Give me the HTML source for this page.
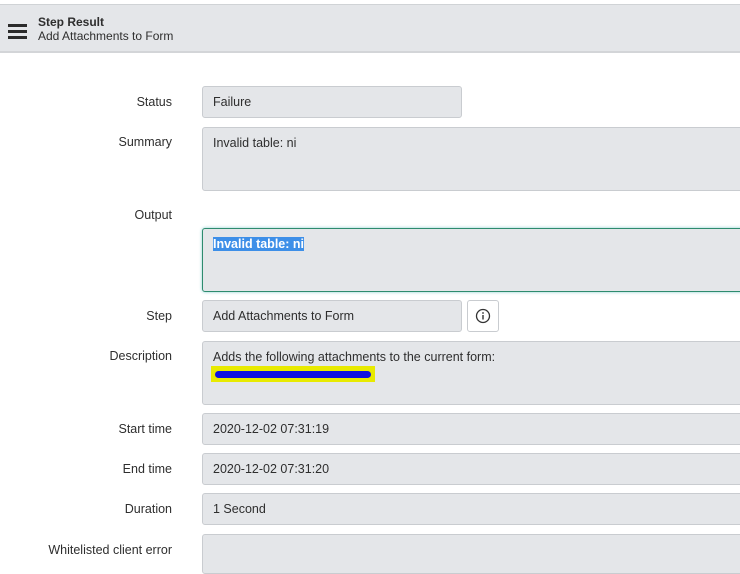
<!DOCTYPE html>
<html><head><style>
body{margin:0;width:740px;height:559px;overflow:hidden;background:#fff;font-family:"Liberation Sans",sans-serif;font-size:12.5px;color:#2e2e2e;position:relative}
.hdr{position:absolute;left:0;top:4px;width:740px;height:46px;background:#e4e6e9;border-top:1px solid #d0d3d6;border-bottom:2px solid #d3d5d8}
.ham{position:absolute;left:8px;top:19px;width:19px}
.ham i{display:block;height:3px;background:#2b2b2b;margin-bottom:3px}
.t1{position:absolute;left:38px;top:10px;font-weight:bold;font-size:12px}
.t2{position:absolute;left:38px;top:24px;font-size:12px}
.l{position:absolute;right:568px;text-align:right}
.f{position:absolute;left:202px;background:#e4e6e9;border:1px solid #c9ccd0;border-radius:3px;box-sizing:border-box;padding:0 10px}
</style></head><body>
<div class="hdr"><div class="ham"><i></i><i></i><i></i></div><div class="t1">Step Result</div><div class="t2">Add Attachments to Form</div></div>

<div class="l" style="top:95px">Status</div>
<div class="f" style="top:86px;width:260px;height:32px;line-height:30px">Failure</div>
<div class="l" style="top:135px">Summary</div>
<div class="f" style="top:127px;width:560px;height:64px;padding-top:8px">Invalid table: ni</div>
<div class="l" style="top:208px">Output</div>
<div class="f" style="top:228px;width:560px;height:64px;padding-top:8px;border-color:#2e8b6e;box-shadow:0 0 3px #8cc"><span style="background:#3d8fe8;color:#fff;font-weight:bold">Invalid table: ni</span></div>
<div class="l" style="top:309px">Step</div>
<div class="f" style="top:300px;width:260px;height:32px;line-height:30px">Add Attachments to Form</div>
<div style="position:absolute;left:467px;top:300px;width:32px;height:32px;box-sizing:border-box;border:1px solid #c9ccd0;border-radius:3px;background:#fff">
<svg width="30" height="30" viewBox="0 0 30 30"><circle cx="15" cy="15" r="6.5" fill="none" stroke="#333" stroke-width="1.3"/><rect x="14.3" y="14" width="1.4" height="4.5" fill="#333"/><circle cx="15" cy="12" r="0.9" fill="#333"/></svg></div>
<div class="l" style="top:349px">Description</div>
<div class="f" style="top:341px;width:560px;height:64px;padding-top:8px">Adds the following attachments to the current form:
<div style="position:absolute;left:8px;top:24px;width:164px;height:16px;background:#e8ea00"></div>
<div style="position:absolute;left:12px;top:29px;width:156px;height:7px;background:#1010e0;border-radius:4px"></div></div>
<div class="l" style="top:422px">Start time</div>
<div class="f" style="top:413px;width:560px;height:32px;line-height:30px">2020-12-02 07:31:19</div>
<div class="l" style="top:462px">End time</div>
<div class="f" style="top:453px;width:560px;height:32px;line-height:30px">2020-12-02 07:31:20</div>
<div class="l" style="top:502px">Duration</div>
<div class="f" style="top:493px;width:560px;height:32px;line-height:30px">1 Second</div>
<div class="l" style="top:543px">Whitelisted client error</div>
<div class="f" style="top:534px;width:560px;height:40px"></div>
</body></html>
